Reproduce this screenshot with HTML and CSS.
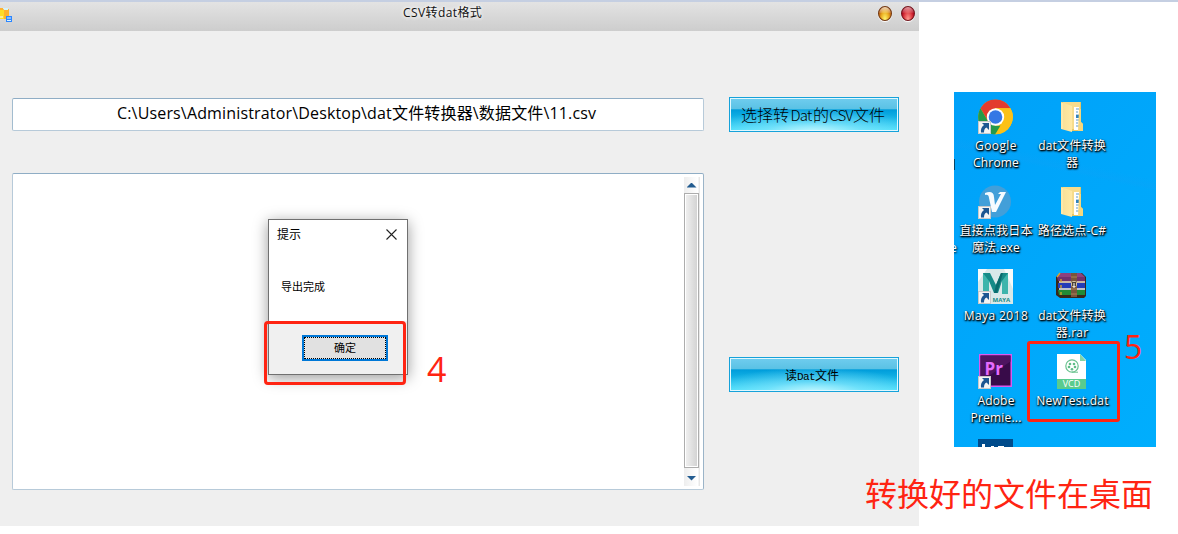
FILE: index.html
```html
<!DOCTYPE html>
<html lang="zh-CN">
<head>
<meta charset="utf-8">
<title>CSV转dat格式</title>
<link rel="stylesheet" href="styles.css">
</head>
<body>
<svg width="0" height="0" class="defs">
  <defs>
    <g id="shortcut"><rect x=".5" y="22.500" width="12" height="12" fill="#f4f4f4" stroke="#c9c9c9"/><path d="M4 24h7v7l-2.500-2.500C6.500 29.500 6 31 6 33.500H3c-.5-3.500.5-5.500 3-7.500z" fill="#1d5792"/></g>
    <linearGradient id="fold" x2="1"><stop stop-color="#f8df96"/><stop offset="1" stop-color="#ffe9a4"/></linearGradient>
    <g id="folder"><path d="M7 3h20v20l2 2v7H18z" fill="#e9c765"/><path d="M9 3h17v27H13z" fill="#f7dc8c"/><path d="M20 8h5v23h-5z" fill="#fff"/><path d="M22 10h3m-3 3h2m-2 3h3m-3 5h3m-3 3h2m-2 3h3" stroke="#5e9bc8"/><path d="M22 16h3v3h-3z" fill="#2e82bd"/><path d="M25 10h2v13l2 2v7h-5z" fill="#f5d77e"/><path d="M7 3l11 4v26L7 30z" fill="url(#fold)"/><path d="M8 4v26" stroke="#fff0bc"/></g>
  </defs>
</svg>
<div class="screen">
  <main class="window">
    <header class="titlebar">
      <svg class="app-icon" width="13" height="16" viewBox="0 0 13 16"><path d="M0 2h3v1h6v10H0z" fill="#ffb22d"/><path d="M0 4h4v9H0z" fill="#ffdc28"/><path d="M3 2h5v2H4z" fill="#d6f4f7"/><path d="M0 11h3" stroke="#fff"/><rect x="6" y="10" width="6" height="6" fill="#2c86ff"/><path d="M7 12h4m-4 2.500h4" stroke="#d9f1ff"/></svg>
      <h1 class="title">CSV转dat格式</h1>
      <div class="orbs"><i class="orb amber"></i><i class="orb red"></i></div>
    </header>
    <section class="content">
      <div class="path-field"><span>C:\Users\Administrator\Desktop\dat文件转换器\数据文件\11.csv</span></div>
      <button class="glass"><span class="song">选择转<span class="mono">Dat</span>的<span class="mono">CSV</span>文件</span></button>
      <div class="log">
        <div class="scrollbar"><i class="up"></i><i class="thumb"></i><i class="down"></i></div>
      </div>
      <button class="glass read"><span class="song small">读<span class="mono">Dat</span>文件</span></button>
    </section>
  </main>
  <aside class="desktop">
    <div class="item"><svg width="36" height="36" viewBox="0 0 36 36"><circle cx="17.500" cy="18" r="17.300" fill="#fbc116"/><path d="M2.500 9.300A17.300 17.300 0 0 1 32.500 9.300H17.500L10 22z" fill="#e33b2e"/><path d="M2.500 9.300L10 22.300l7.500 4.400h7.500L17.300 35.300A17.300 17.300 0 0 1 2.500 9.300" fill="#24994a"/><path d="M17.500 9.300h15A17.300 17.300 0 0 1 17.300 35.300L25 22.300z" fill="#fbc116"/><circle cx="17.500" cy="18" r="8.700" fill="#fff"/><circle cx="17.500" cy="18" r="6.800" fill="#3478e5"/><use href="#shortcut"/></svg><p class="label"><span class="google">Google</span><br><span class="wide">Chrome</span></p></div>
    <div class="item"><svg width="36" height="36"><use href="#folder"/></svg><p class="label">dat文件转换<br>器</p></div>
    <div class="item"><svg width="36" height="36" viewBox="0 0 36 36"><circle cx="17" cy="17.500" r="16" fill="#429fd9"/><path d="M7 9c5-2 9-1 9 4l1 8 6-11h-3l2-2h6L18 28h-4L11 14c0-3-2-4-4-3z" fill="#f5fbff"/><use href="#shortcut"/></svg><p class="label">直接点我日本<br>魔法.exe</p></div>
    <div class="item"><svg width="36" height="36"><use href="#folder"/></svg><p class="label">路径选点-C#</p></div>
    <div class="item"><svg width="36" height="36" viewBox="0 0 36 36"><path d="M0 0h35v35H0z" fill="#d9e9e9"/><path d="M0 0h9L0 13zm26 0h9v20z" fill="#f7fafa"/><path d="M5 4h7l6 12 5-12h7v21h-6V12l-4 12h-4L11 12v13H5z" fill="#168b88"/><path d="M5 4l6 8v13H5zM30 4l-6 8v13h6z" fill="#3cb5ac"/><path d="M18 16l5-12h2l-6 20h-3z" fill="#0a6b6d"/><text x="14.500" y="33" class="maya-mark">MAYA</text><use href="#shortcut"/></svg><p class="label maya">Maya 2018</p></div>
    <div class="item"><svg width="36" height="36" viewBox="0 0 36 36"><path d="M2 8l4-4h22l4 4v19l-2 2H6l-4-3z" fill="#382719"/><path d="M6 4h21l4 4H3z" fill="#8d427e"/><path d="M3 8h28v4H4z" fill="#71316d"/><path d="M5 12h26v2H5z" fill="#c8b7a5"/><path d="M4 14h27v5H4z" fill="#233bb7"/><path d="M5 19h26v2H5z" fill="#bdc2c8"/><path d="M4 21h27v5H5z" fill="#228a36"/><path d="M6 4L3 8m4 2v3m0 3v3m0 4v3" stroke="#dca82a" stroke-width="1.300"/><path d="M17 4h6v24h-6z" fill="#79553b"/><path d="M17 8h6m-6 12h6m-6 5h6" stroke="#ad8357"/><rect x="17.500" y="12.500" width="5" height="5" rx="1" fill="#4a4033" stroke="#d5c2a3"/><path d="M20 14v5" stroke="#fff"/></svg><p class="label">dat文件转换<br>器.rar</p></div>
    <div class="item"><svg width="36" height="36" viewBox="0 0 36 36"><path d="M1 0h33v33H1z" fill="#db59ef"/><path d="M2.500 1.500h30v30h-30z" fill="#380b49"/><path d="M2.500 1.500h30v6l-30 20z" fill="#4e1460"/><text x="6.500" y="21" class="pr-mark">Pr</text><use href="#shortcut"/></svg><p class="label"><span class="wide">Adobe</span><br>Premie...</p></div>
    <div class="item"><svg width="36" height="36" viewBox="0 0 36 36"><path d="M3 0h23l6 6v29H3z" fill="#fff"/><path d="M26 0v7h6z" fill="#82d4a6"/><path d="M3 25h29v10H3z" fill="#5acb8e"/><circle cx="18" cy="12" r="6.200" fill="none" stroke="#6ac28f" stroke-width="1.200"/><g fill="#60bd88"><circle cx="16" cy="10" r="1.300"/><circle cx="20" cy="10" r="1.300"/><circle cx="15" cy="13" r="1.300"/><circle cx="21" cy="13" r="1.300"/><circle cx="18" cy="15.300" r="1.300"/></g><path d="M18 18.200h6" stroke="#6ac28f"/><text x="17.500" y="33" class="vcd-mark">VCD</text></svg><p class="label newtest">NewTest.dat</p></div>
    <div class="item"><svg width="36" height="36" viewBox="0 0 36 36"><path d="M0 0h35v35H0z" fill="#004b8b"/><path d="M4 5h3v20H4zM13 7h3v2h-3zM20 7h6v2h-6z" fill="#fff"/></svg></div>
    <i class="edge one"></i><i class="edge two">e</i>
  </aside>
  <section class="dialog">
    <header><span>提示</span><svg width="11" height="11" viewBox="0 0 11 11"><path d="M.5.500l10 10M10.500.500l-10 10" stroke="#222" stroke-width="1.100"/></svg></header>
    <p>导出完成</p>
    <footer><button><span>确定</span></button></footer>
  </section>
  <i class="mark confirm"></i><i class="mark result"></i>
  <span class="note four">4</span><span class="note five">5</span><span class="note caption">转换好的文件在桌面</span>
</div>
</body>
</html>
```
FILE: styles.css
```css
* { box-sizing: border-box; }
body { margin: 0; font: 12px/17px "Open Sans", "Noto Sans CJK SC", sans-serif; color: #000; background: #fff; overflow: hidden; }
.defs { position: absolute; }
h1, p { margin: 0; font: inherit; }
button { padding: 0; font: inherit; color: #000; }
.screen { position: relative; width: 1178px; height: 534px; border-top: 2px solid #c5cfe2; display: flex; align-items: flex-start; overflow: hidden; }
.window { width: 919px; height: 524px; background: #efefef; flex: none; }
.titlebar { height: 29px; display: grid; grid-template-columns: 400px 1fr 400px; background: linear-gradient(#e3e3e3, #cdcdcd); }
.app-icon { margin-top: 4px; }
.title { justify-self: start; margin: 2px 0 0 3px; white-space: nowrap; color: #111; letter-spacing: .4px; text-shadow: 0 0 4px #fff, 0 0 4px #fff; }
.orbs { display: flex; justify-content: flex-end; gap: 9px; padding: 4px 4px 0 0; }
.orb { width: 14px; height: 15px; border-radius: 50%; border: 1px solid #723710; box-shadow: 0 1px 1px #fff; background: linear-gradient(#ffffffb0, #ffffff30 42%, transparent 45%), radial-gradient(ellipse at 50% 95%, #fff871, #e9a91e 48%, #b95b13 80%); }
.orb.red { border-color: #74151c; background: linear-gradient(#ffffff90, #ffffff20 42%, transparent 45%), radial-gradient(ellipse at 50% 95%, #ff9c91, #dd3b42 48%, #a80018 80%); }
.content { display: grid; grid-template-columns: 692px 170px; column-gap: 25px; grid-template-rows: 35px 317px; row-gap: 41px; padding: 66px 0 0 12px; }
.path-field { height: 33px; margin-top: 1px; border: 1px solid #b7cad9; border-top-color: #8fadc5; border-left-color: #a2bccf; border-radius: 2px; background: #fff; font-size: 16px; line-height: 29px; padding-left: 104px; white-space: nowrap; letter-spacing: .16px; }
.glass { width: 170px; height: 35px; border: 1px solid #16a2da; box-shadow: inset 0 0 0 1px #e1f8ff; background: radial-gradient(ellipse 65% 75% at 50% 105%, #c6f7ff, #98ebff88 45%, transparent), linear-gradient(#70cdef, #5bc2e5 32%, #009ddb 36%, #13b2e5 60%, #4ae1fc); }
.glass.read { margin-top: 184px; }
.song { display: block; font: 300 16px/31px "Noto Sans CJK SC", sans-serif; white-space: nowrap; padding-right: 2px; }
.mono { display: inline-block; width: 24px; font: 300 15px/20px "Noto Sans CJK SC", sans-serif; letter-spacing: -.8px; }
.song.small { font-size: 12px; padding-right: 4px; font-weight: 400; }
.small .mono { width: 18px; font: 400 11px/15px "Liberation Mono", monospace; letter-spacing: -.6px; }
.log { border: 1px solid #b7cad9; border-top-color: #8fadc5; border-right-color: #9bb4c8; border-radius: 2px; background: #fff; display: flex; justify-content: flex-end; padding: 3px 3px 3px 0; }
.scrollbar { width: 16px; display: flex; flex-direction: column; background: linear-gradient(90deg, #eee, #fff 85%, #e2e2e2); }
.scrollbar .up, .scrollbar .down { height: 16px; padding-right: 1px; display: grid; place-items: center; }
.scrollbar .down { height: 18px; padding-top: 2px; }
.up::before, .down::before { content: ""; width: 10px; height: 5px; background: #235c90; clip-path: polygon(50% 0, 100% 100%, 0 100%); }
.down::before { clip-path: polygon(0 0, 100% 0, 50% 100%); }
.thumb { flex: 1; width: 15px; border: 1px solid #adadad; box-shadow: inset 0 0 0 1px #fff; background: linear-gradient(90deg, #f1f1f1, #d1d1d1); }
.desktop { position: relative; overflow: hidden; width: 202px; height: 355px; margin: 90px 0 0 35px; display: grid; grid-template-columns: 76px 76px; grid-auto-rows: 85px; padding: 7px 0 0 4px; background: linear-gradient(12deg, transparent 75%, #159ff533 76%, transparent 78%), linear-gradient(130deg, #00a1f9, #00aefd); }
.item { display: flex; flex-direction: column; align-items: center; }
.item svg { flex: none; }
.label { height: 34px; margin: 2px 0 0; text-align: center; color: #fff; white-space: nowrap; text-shadow: 1px 1px 2px #000, 0 1px 2px #000, 1px 1px 1px #000a; letter-spacing: .2px; }
.google { letter-spacing: .4px; }
.wide { letter-spacing: .2px; }
.maya { letter-spacing: .4px; }
.newtest { letter-spacing: .25px; padding-left: 1px; }
.maya-mark { font: bold 6px "Open Sans", sans-serif; fill: #168b88; }
.pr-mark { font: bold 17px "Open Sans", sans-serif; fill: #e66bff; }
.vcd-mark { font: 9px "Open Sans", sans-serif; fill: #fff; text-anchor: middle; }
.edge { position: absolute; left: -1px; top: 67px; width: 2px; height: 11px; background: #064568; }
.edge.two { left: -4px; top: 147px; width: auto; background: none; color: #fff; font-style: normal; text-shadow: 1px 1px 2px #000; }
.dialog { position: absolute; left: 268px; top: 217px; width: 140px; height: 156px; border: 1px solid #707070; background: #fff; box-shadow: 0 3px 14px #0006; display: flex; flex-direction: column; }
.dialog header { display: flex; justify-content: space-between; padding: 6px 10px 0 8px; }
.dialog header svg { margin-top: 3px; }
.dialog p { margin: 35px 0 0 12px; font-size: 11px; }
.dialog footer { margin-top: auto; height: 53px; padding: 14px 0 0 33px; background: #f0f0f0; }
.dialog button { display: block; width: 86px; height: 26px; border: 2px solid #0078d7; background: #e1e1e1; }
.dialog button span { display: block; height: 22px; border: 1px dotted #000; font-size: 11px; line-height: 20px; }
.mark { position: absolute; border: 3px solid #ff2412; border-radius: 4px; }
.mark.confirm { left: 264px; top: 319px; width: 142px; height: 64px; }
.mark.result { left: 1027px; top: 339px; width: 93px; height: 81px; border-radius: 3px; }
.note { position: absolute; color: #ff2412; font: 400 32px/40px "Noto Sans CJK SC", sans-serif; white-space: nowrap; }
.four { left: 427px; top: 347px; font: 34px/40px "Open Sans", sans-serif; }
.five { left: 1124px; top: 325px; font: 32px/40px "Open Sans", sans-serif; }
.caption { left: 865px; top: 470px; }
```
